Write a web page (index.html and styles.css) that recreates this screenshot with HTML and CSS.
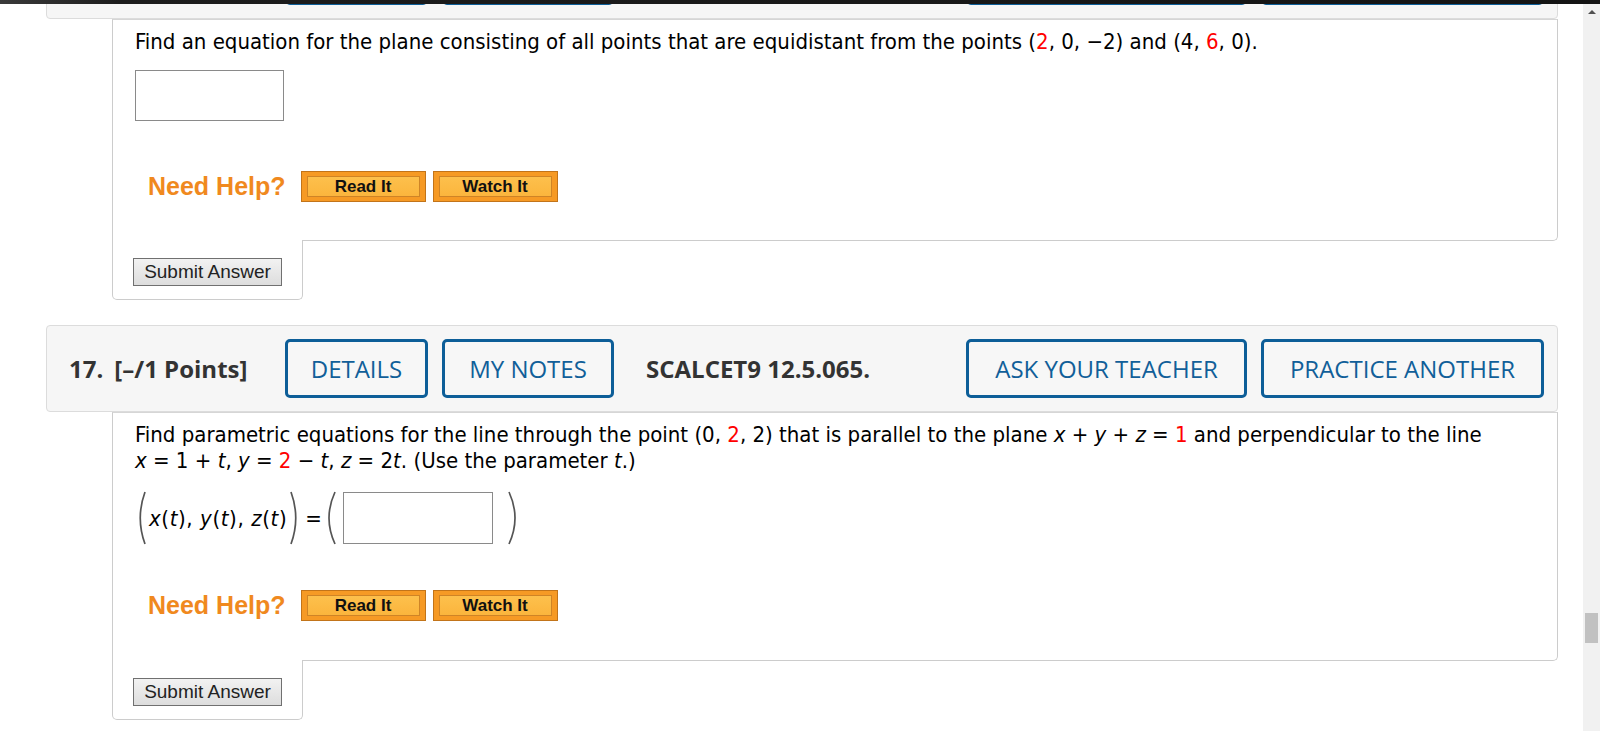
FILE: index.html
```html
<!DOCTYPE html>
<html>
<head>
<meta charset="utf-8">
<link rel="stylesheet" href="styles.css">
</head>
<body>
<div class="topbar"></div>
<div class="layout">
  <main class="page">
    <section class="q q-prev">
      <header class="qhead">
        <div class="qlabel"><span class="qnum">16.</span><span class="qpts">[–/1 Points]</span></div>
        <button class="hbtn w-details">DETAILS</button>
        <button class="hbtn w-notes">MY NOTES</button>
        <span class="qcode">SCALCET9 12.5.061.</span>
        <div class="hright">
          <button class="hbtn w-ask">ASK YOUR TEACHER</button>
          <button class="hbtn w-practice">PRACTICE ANOTHER</button>
        </div>
      </header>
      <div class="qbody">
        <p class="qtext">Find an equation for the plane consisting of all points that are equidistant from the points (<span class="red">2</span>, 0, −2) and (4, <span class="red">6</span>, 0).</p>
        <div class="answer"><span class="inputbox"></span></div>
        <div class="help">
          <span class="needhelp">Need Help?</span>
          <span class="obtn"><span class="oin">Read It</span></span>
          <span class="obtn"><span class="oin">Watch It</span></span>
        </div>
      </div>
      <div class="tab"><button class="submit">Submit Answer</button></div>
    </section>

    <section class="q">
      <header class="qhead">
        <div class="qlabel"><span class="qnum">17.</span><span class="qpts">[–/1 Points]</span></div>
        <button class="hbtn w-details">DETAILS</button>
        <button class="hbtn w-notes">MY NOTES</button>
        <span class="qcode">SCALCET9 12.5.065.</span>
        <div class="hright">
          <button class="hbtn w-ask">ASK YOUR TEACHER</button>
          <button class="hbtn w-practice">PRACTICE ANOTHER</button>
        </div>
      </header>
      <div class="qbody qbody-eq">
        <p class="qtext">Find parametric equations for the line through the point (0, <span class="red">2</span>, 2) that is parallel to the plane <i>x</i> + <i>y</i> + <i>z</i> = <span class="red">1</span> and perpendicular to the line<br><i>x</i> = 1 + <i>t</i>, <i>y</i> = <span class="red">2</span> − <i>t</i>, <i>z</i> = 2<i>t</i>. (Use the parameter <i>t</i>.)</p>
        <div class="eqrow">
          <svg class="paren" width="12" height="54" viewBox="0 0 12 54"><path d="M10 1 Q0.5 27 10 53" fill="none" stroke="#555" stroke-width="1.7"/></svg>
          <span class="eqtext"><i>x</i>(<i>t</i>), <i>y</i>(<i>t</i>), <i>z</i>(<i>t</i>)</span>
          <svg class="paren" width="12" height="54" viewBox="0 0 12 54"><path d="M2 1 Q11.5 27 2 53" fill="none" stroke="#555" stroke-width="1.7"/></svg>
          <span class="eq">=</span>
          <svg class="paren paren-l" width="15" height="54" viewBox="0 0 15 54"><path d="M13 1 Q1 27 13 53" fill="none" stroke="#555" stroke-width="1.7"/></svg>
          <span class="inputbox eqinput"></span>
          <svg class="paren paren-r" width="15" height="54" viewBox="0 0 15 54"><path d="M2 1 Q14 27 2 53" fill="none" stroke="#555" stroke-width="1.7"/></svg>
        </div>
        <div class="help">
          <span class="needhelp">Need Help?</span>
          <span class="obtn"><span class="oin">Read It</span></span>
          <span class="obtn"><span class="oin">Watch It</span></span>
        </div>
      </div>
      <div class="tab"><button class="submit">Submit Answer</button></div>
    </section>
  </main>
  <div class="scrollbar">
    <div class="sb-arrow"></div>
    <div class="sb-track"><div class="sb-thumb"></div></div>
  </div>
</div>
</body>
</html>
```
FILE: styles.css
```css
html, body {
  margin: 0;
  padding: 0;
  height: 100%;
  overflow: hidden;
  background: #fff;
}
body {
  font-family: "DejaVu Sans", Verdana, sans-serif;
}
.topbar {
  position: fixed;
  top: 0;
  left: 0;
  right: 0;
  height: 4px;
  background: linear-gradient(90deg, #3a3a3a 0, #1c1c1c 120px, #141414 100%);
  z-index: 10;
}
.layout {
  display: flex;
  height: 100%;
}
.page {
  flex: 1;
  padding: 0 25px 0 46px;
  min-width: 0;
}
.q-prev {
  margin-top: -68px;
}
.q + .q {
  margin-top: 25px;
}
.qhead {
  display: flex;
  align-items: center;
  height: 59px;
  padding: 13px 13px 13px 22px;
  background: #f6f6f6;
  border: 1px solid #dcdcdc;
  border-radius: 4px;
  font-family: "Open Sans", "Noto Sans", sans-serif;
  font-stretch: 90%;
  color: #333;
}
.qlabel {
  width: 216px;
  display: flex;
  gap: 11px;
  font-weight: 700;
  font-size: 24px;
}
.hbtn {
  box-sizing: border-box;
  height: 59px;
  border: 3px solid #0d5e98;
  border-radius: 5px;
  background: #f7f7f7;
  color: #115f99;
  font-family: "Open Sans", "Noto Sans", sans-serif;
  font-stretch: 90%;
  font-size: 24px;
  font-weight: 400;
  padding: 0;
  margin: 0;
}
.w-details { width: 143px; }
.w-notes { width: 172px; margin-left: 14px; }
.w-ask { width: 281px; }
.w-practice { width: 283px; }
.qcode {
  margin-left: 32px;
  font-weight: 700;
  font-size: 24px;
}
.hright {
  margin-left: auto;
  display: flex;
  gap: 14px;
}
.qbody {
  margin-left: 66px;
  border: 1px solid #cccccc;
  border-top: 1px solid #d6d6d6;
  border-radius: 0 0 5px 0;
  padding: 9px 22px 38px 22px;
  color: #000;
}
.qbody-eq {
  padding-bottom: 39px;
}
.qtext {
  margin: 0;
  font-size: 22px;
  line-height: 26px;
  font-stretch: condensed;
}
.red { color: #f00; }
.answer {
  margin-top: 15px;
  height: 51px;
}
.inputbox {
  display: block;
  box-sizing: border-box;
  width: 149px;
  height: 51px;
  border: 1px solid #8a8a8a;
  background: #fff;
}
.help {
  margin-top: 50px;
  margin-left: 13px;
  display: flex;
  align-items: center;
  height: 31px;
}
.needhelp {
  font-family: "Liberation Sans", Arial, sans-serif;
  font-weight: 700;
  font-size: 25px;
  color: #f0891e;
  margin-right: 15px;
}
.obtn {
  box-sizing: border-box;
  width: 125px;
  height: 31px;
  padding: 4px 5px;
  border: 1px solid #c2741a;
  background: #f69a25;
  display: flex;
  margin-right: 7px;
}
.oin {
  flex: 1;
  display: flex;
  align-items: center;
  justify-content: center;
  border: 1px solid #cf8426;
  background: linear-gradient(#fdc04c, #fbb53d);
  font-family: "Liberation Sans", Arial, sans-serif;
  font-weight: 700;
  font-size: 17px;
  color: #111;
}
.eqrow {
  margin-top: 17px;
  height: 54px;
  display: flex;
  align-items: center;
  font-size: 22px;
  font-stretch: condensed;
}
.eqrow + .help {
  margin-top: 45px;
}
.paren { display: block; }
.eqtext {
  margin: 0 2px 0 2px;
  letter-spacing: 0.6px;
}
.eq { margin: 0 0 0 4px; }
.paren-l { margin-right: 6px; }
.paren-r { margin-left: 14px; }
.eqinput {
  width: 150px;
  height: 52px;
}
.tab {
  box-sizing: border-box;
  width: 191px;
  margin-left: 66px;
  margin-top: -1px;
  position: relative;
  background: #fff;
  border: 1px solid #cccccc;
  border-top: none;
  border-radius: 0 0 5px 5px;
  padding: 18px 0 13px 20px;
}
.submit {
  box-sizing: border-box;
  width: 149px;
  height: 28px;
  margin: 0;
  padding: 0;
  border: 1px solid #707070;
  background: linear-gradient(#f2f2f2, #dddddd);
  font-family: "Liberation Sans", Arial, sans-serif;
  font-size: 19px;
  color: #222;
  display: block;
}
.scrollbar {
  width: 17px;
  background: #f1f1f1;
  display: flex;
  flex-direction: column;
  align-items: center;
}
.sb-arrow {
  margin-top: 10px;
  width: 0;
  height: 0;
  border-left: 4px solid transparent;
  border-right: 4px solid transparent;
  border-bottom: 4px solid #505050;
}
.sb-track {
  flex: 1;
  width: 100%;
  display: flex;
  justify-content: center;
}
.sb-thumb {
  margin-top: 599px;
  width: 13px;
  height: 30px;
  background: #c1c1c1;
}
```
